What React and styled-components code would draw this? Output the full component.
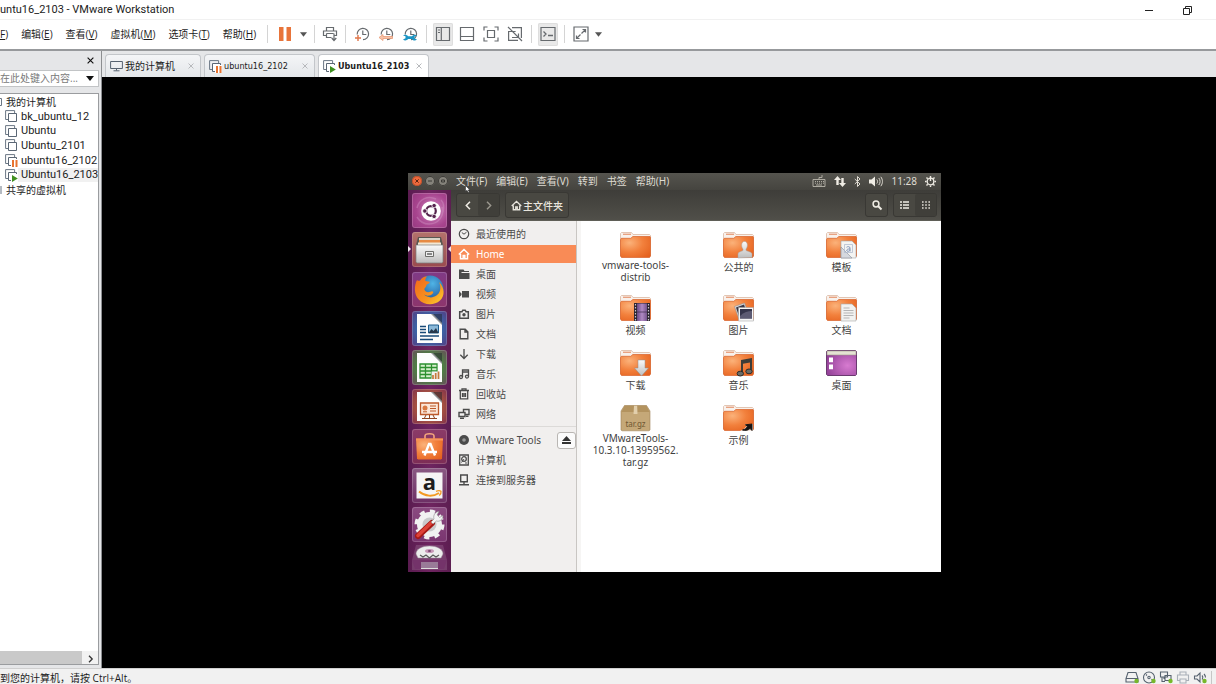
import React from "react";
import styled, { createGlobalStyle, css } from "styled-components";

const Global = createGlobalStyle`
  *, *::before, *::after { box-sizing: border-box; }
  html, body { margin: 0; padding: 0; }
  body {
    font-family: "Open Sans", "Noto Sans CJK SC", sans-serif;
    font-size: 10px;
    color: #1c1c1c;
    background: #e5e6e8;
  }
  button, input { font: inherit; color: inherit; }
  button { border: 0; padding: 0; margin: 0; background: none; white-space: nowrap; }
  ul { list-style: none; margin: 0; padding: 0; }
  svg { display: block; flex: none; overflow: visible; }
`;

/* ---------- host application shell ---------- */

const Shell = styled.div`
  min-height: 100vh;
  display: flex;
  flex-direction: column;
  overflow: hidden;
`;

const TitleBar = styled.header`
  height: 20px;
  flex: none;
  display: flex;
  align-items: center;
  justify-content: space-between;
  background: #fff;
  border-bottom: 1px solid #f1f1f1;
`;

const Title = styled.h1`
  margin: 0;
  font-family: Roboto, "Open Sans", sans-serif;
  font-size: 11px;
  font-weight: 400;
  line-height: 18px;
  white-space: nowrap;
`;

const WindowButtons = styled.div`
  display: flex;
  gap: 26px;
  padding-right: 23px;
`;

const MenuRow = styled.div`
  height: 31px;
  flex: none;
  display: flex;
  align-items: center;
  padding-bottom: 1px;
  background: #fff;
  border-bottom: 2px solid #97999c;
`;

const MenuBar = styled.nav`
  display: flex;
  gap: 13px;
  line-height: 16px;
  margin-right: 11px;
  u { text-underline-offset: 1px; }
`;

const Separator = styled.span`
  width: 1px;
  height: 18px;
  flex: none;
  background: #d4d4d4;
`;

const ToolGroup = styled.div`
  display: flex;
  align-items: center;
  gap: 4px;
  padding: 0 ${(p) => p.$pad}px;
`;

const Tool = styled.button`
  width: 20px;
  height: 23px;
  display: grid;
  place-items: center;
  border-radius: 2px;
  background: ${(p) => (p.$active ? "#e9e9e9" : "transparent")};
  ${(p) => p.$active && css`box-shadow: inset 0 0 0 1px #dedede;`}
`;

const Caret = styled.button`
  width: ${(p) => p.$w || 8}px;
  height: 16px;
  display: grid;
  place-items: center;
`;

const Body = styled.div`
  flex: 1;
  display: flex;
  min-height: 0;
`;

const Library = styled.aside`
  width: 102px;
  flex: none;
  display: flex;
  flex-direction: column;
  padding: 0 2px 3px 0;
  background: #e5e6e8;
  border-right: 1px solid #8c8e91;
`;

const LibraryHead = styled.div`
  height: 19px;
  display: flex;
  align-items: center;
  justify-content: flex-end;
  padding-right: 5px;
`;

const SearchBox = styled.div`
  height: 17px;
  display: flex;
  align-items: center;
  background: #fff;
  border: 1px solid #c2c4c6;
  border-left: 0;
  input {
    flex: 1;
    min-width: 0;
    padding: 0;
    border: 0;
    outline: 0;
    background: none;
    line-height: 15px;
    height: 15px;
  }
  input::placeholder { color: #7a7a7a; opacity: 1; }
`;

const TreeBox = styled.div`
  flex: 1;
  margin-top: 6px;
  display: flex;
  flex-direction: column;
  justify-content: space-between;
  background: #fff;
  border: 1px solid #9a9c9f;
  border-left: 0;
`;

const Tree = styled.ul`
  height: 103px;
  display: grid;
  grid-template-rows: repeat(7, 1fr);
  padding-top: 1px;
`;

const TreeRow = styled.button`
  width: 100%;
  height: 100%;
  display: flex;
  align-items: center;
  gap: ${(p) => (p.$vm ? 3 : 4)}px;
  line-height: 14px;
  font-size: ${(p) => (p.$vm ? 11 : 10)}px;
  padding-left: ${(p) => (p.$vm ? 5 : 0)}px;
  ${(p) => p.$vm && css`font-family: Roboto, "Open Sans", sans-serif;`}
  ${(p) => p.$selected && css`background: linear-gradient(90deg, #fff 18px, #f1f1f1 18px);`}
`;

const HScroll = styled.div`
  height: 13px;
  display: flex;
  align-items: stretch;
  background: #f2f2f2;
`;
const Thumb = styled.span`
  flex: 1;
  background: #c9c9c9;
`;

const Workspace = styled.main`
  flex: 1;
  min-width: 0;
  display: flex;
  flex-direction: column;
`;

const TabStrip = styled.div`
  height: 26px;
  flex: none;
  display: flex;
  align-items: flex-end;
  gap: 3px;
  padding-left: 3px;
`;

const Tab = styled.div`
  height: 23px;
  width: ${(p) => (p.$home ? 96 : 111)}px;
  display: flex;
  align-items: center;
  justify-content: space-between;
  padding: 0 6px 0 4px;
  border: 1px solid #c3c6ca;
  border-bottom: 0;
  border-radius: 4px 4px 0 0;
  background: ${(p) => (p.$active ? "#fff" : "linear-gradient(#f4f5f7, #e4e7ea)")};
`;

const TabLabel = styled.button`
  display: flex;
  align-items: center;
  gap: 2px;
  line-height: 16px;
  ${(p) =>
    p.$latin &&
    css`
      font-family: "DejaVu Sans Condensed", "DejaVu Sans", sans-serif;
      font-stretch: condensed;
      font-size: 9px;
    `}
  font-weight: ${(p) => (p.$active ? 700 : 400)};
`;

const Stage = styled.section`
  flex: 1;
  display: grid;
  place-items: center;
  padding-left: 31px;
  background: #000;
`;

const StatusBar = styled.footer`
  height: 16px;
  flex: none;
  display: flex;
  align-items: center;
  justify-content: space-between;
  background: #f1f1f1;
  border-top: 1px solid #cfcfcf;
  line-height: 14px;
  white-space: nowrap;
  padding-top: 2px;
`;
const StatusIcons = styled.div`
  display: flex;
  align-items: center;
  gap: 3px;
  padding-right: 4px;
`;
const Grip = styled.span`
  width: 1px;
  height: 13px;
  margin-left: 1px;
  background: #c6c6c6;
`;

/* ---------- guest desktop ---------- */

const Guest = styled.div`
  position: relative;
  width: 533px;
  height: 399px;
  display: flex;
  flex-direction: column;
  color: #3c3c3c;
  font-family: "Noto Sans", "Noto Sans CJK SC", sans-serif;
`;

const Panel = styled.div`
  height: 17px;
  flex: none;
  display: flex;
  align-items: center;
  justify-content: space-between;
  padding: 0 5px 1px 4px;
  color: #dfdbd2;
  background: linear-gradient(#55544e, #45443f);
`;

const PanelLeft = styled.div`
  display: flex;
  align-items: center;
`;
const Lights = styled.div`
  display: flex;
  gap: 3px;
`;
const Light = styled.button`
  width: 10px;
  height: 10px;
  display: grid;
  place-items: center;
  border-radius: 50%;
  color: #3b3a36;
  background: ${(p) => (p.$close ? "#ee6a3d" : "#85837b")};
  box-shadow: inset 0 0 0 1px ${(p) => (p.$close ? "#b9502c" : "#3b3a36")};
`;
const GuestMenu = styled.nav`
  display: flex;
  gap: 9px;
  margin-left: 8px;
  line-height: 16px;
`;
const Indicators = styled.div`
  display: flex;
  align-items: center;
  gap: 8px;
  line-height: 16px;
`;

const GuestBody = styled.div`
  flex: 1;
  display: flex;
  min-height: 0;
`;

const Launcher = styled.nav`
  width: 43px;
  flex: none;
  display: flex;
  flex-direction: column;
  padding: 3px 4px 0;
  background: linear-gradient(90deg, #5a1c50, #6f2460 50%, #5c1e51);
`;
const LauncherItems = styled.div`
  flex: 1;
  display: flex;
  flex-direction: column;
  justify-content: space-between;
`;
const Tile = styled.button`
  position: relative;
  width: 35px;
  height: 35px;
  display: grid;
  place-items: center;
  border-radius: 3px;
  background: ${(p) => p.$bg};
  box-shadow: inset 0 0 0 1px rgba(255, 255, 255, 0.18);
`;
const Pip = styled.span`
  position: absolute;
  top: 14px;
  ${(p) => (p.$right ? "right: -4px" : "left: -4px")};
  border: 3px solid transparent;
  ${(p) =>
    p.$right
      ? "border-right-color: #f0e6ee; border-left: 0"
      : "border-left-color: #f0e6ee; border-right: 0"};
`;
const Folded = styled.button`
  height: 30px;
  flex: none;
  display: grid;
  place-items: center;
`;

const Nautilus = styled.div`
  flex: 1;
  min-width: 0;
  display: flex;
  flex-direction: column;
`;
const NautilusBar = styled.div`
  height: 31px;
  flex: none;
  display: flex;
  align-items: center;
  gap: 5px;
  padding: 0 4px 0 5px;
  color: #e8e5dd;
  background: linear-gradient(#3e3d39, #504f49);
  border-bottom: 1px solid #5f5e57;
`;
const BarGroup = styled.div`
  display: flex;
  border: 1px solid #393834;
  border-radius: 3px;
  background: #494842;
  margin-left: ${(p) => (p.$push ? "auto" : 0)};
`;
const BarButton = styled.button`
  min-width: 21px;
  height: ${(p) => (p.$tall ? 24 : 22)}px;
  padding: 0 ${(p) => (p.$tall ? 5 : 0)}px;
  display: flex;
  align-items: center;
  justify-content: center;
  gap: 1px;
  font-weight: 500;
  background: ${(p) => (p.$dark ? "#403f3a" : "transparent")};
  border-radius: 2px;
`;

const Panes = styled.div`
  flex: 1;
  display: flex;
  min-height: 0;
`;
const Places = styled.aside`
  width: 126px;
  flex: none;
  padding-top: 3px;
  background: #f1efee;
  border-right: 1px solid #c9c6c3;
`;
const PlaceRow = styled.li`
  height: 20px;
  display: flex;
  align-items: center;
`;
const Place = styled.button`
  flex: 1;
  height: 18px;
  display: flex;
  align-items: center;
  gap: 6px;
  padding-left: 7px;
  line-height: 16px;
  font-size: 10px;
  color: ${(p) => (p.$active ? "#fff" : "#4b4b4b")};
  background: ${(p) => (p.$active ? "#f98b56" : "transparent")};
`;
const Rule = styled.hr`
  margin: 2px 0 3px;
  border: 0;
  border-top: 1px solid #dcdad8;
`;
const Eject = styled.button`
  width: 19px;
  height: 17px;
  display: grid;
  place-items: center;
  border: 1px solid #b9b6b3;
  border-radius: 3px;
  background: #fbfbfb;
`;

const Files = styled.ul`
  flex: 1;
  display: grid;
  grid-template-columns: repeat(3, 103px);
  align-content: start;
  row-gap: 12px;
  padding: 11px 0 0 3px;
  border-left: 4px solid #f6f5f4;
  background: #fff;
`;
const FileButton = styled.button`
  width: 100%;
  display: flex;
  flex-direction: column;
  align-items: center;
  gap: 1px;
  line-height: ${(p) => (p.$latin ? 12 : 16)}px;
  font-size: 10px;
  white-space: pre-line;
  color: #3f3f3f;
`;

const Pointer = styled.span`
  position: absolute;
  left: 57px;
  top: 12px;
`;

/* ---------- drawings ---------- */

const Svg = ({ w = 16, h = w, box, children, ...rest }) => (
  <svg width={w} height={h} viewBox={box || `0 0 ${w} ${h}`} fill="none" aria-hidden="true" {...rest}>
    {children}
  </svg>
);

const Down = ({ w = 7, color = "#555" }) => (
  <Svg w={w} h={5} box="0 0 8 5"><path d="M0 0h8L4 5z" fill={color} /></Svg>
);
const Cross = ({ size = 6, color = "#222", width = 1.3 }) => (
  <Svg w={size} box="0 0 8 8"><path d="M.7.7l6.600 6.600M7.300.7L.7 7.300" stroke={color} strokeWidth={width} /></Svg>
);

const VmIcon = ({ state }) => (
  <Svg w={13} h={13}>
    <path d="M3 9.500H.600V.600h9V3" stroke="#6b7785" />
    <path d="M3.500 3.500h8v8h-8z" fill="#fff" stroke="#5b6775" />
    {state === "paused" && (
      <g><path d="M6 5h7v8H6z" fill="#fff" /><path d="M7 6h2v7H7zM10.500 6h2v7h-2z" fill="#e8732f" /></g>
    )}
    {state === "running" && (
      <g><path d="M6 5h6v8H6z" fill="#fff" /><path d="M7 6l5.800 3.500L7 13z" fill="#3f8f1f" /></g>
    )}
  </Svg>
);
const Monitor = () => (
  <Svg w={13} h={12}>
    <path d="M.600 1.500h11.800v7H.600zM6.500 8.500v2M3.500 10.800h6" stroke="#566270" />
  </Svg>
);

const g = "#666a6e";
const PauseIcon = () => <Svg w={12} h={14}><path d="M0 0h4.500v14H0zM7.500 0H12v14H7.500z" fill="#e8743a" /></Svg>;
const SendIcon = () => (
  <Svg w={16} stroke={g} strokeWidth="1.200">
    <path d="M4.500 5V1.500h7V5M4 9.500H1.500V5h13v4.500H12M4.500 7.500h7M4.500 7.500v4H9.500M12 7.500v7M9.700 12l2.300 2.500 2.300-2.500" />
  </Svg>
);
const Clock = ({ children }) => (
  <Svg w={16}>
    <path d="M3.200 8.500A5.700 5.700 0 1 1 9 13.700M8.800 4.500v4h3.500" stroke={g} strokeWidth="1.200" />
    {children}
  </Svg>
);
const SnapIcon = () => <Clock><path d="M4 9v6M1 12h6" stroke="#e0764a" strokeWidth="1.400" /></Clock>;
const RevertIcon = () => <Clock><path d="M14.500 10.500H5V8.500L1 11.500l4 3v-2h9.500z" fill="#f6c2a8" stroke="#e99a76" strokeWidth=".8" /></Clock>;
const ManageIcon = () => (
  <Clock><path d="M1 9.500l2.500.8v2L1 13.500c1.500 1.500 4 1.200 5-.5h4c1.200 2 3.500 2 5 .5l-2.500-1v-2l2.500-1c-1.500-1.300-4-1-5 .8H6c-1-1.700-3.500-2-5-.8z" fill="#1b95c4" /></Clock>
);
const SideIcon = () => <Svg w={16}><path d="M1.500 1.500h13v13h-13zM6.300 1.500v13M3 4h2M3 6.500h2" stroke={g} strokeWidth="1.200" /></Svg>;
const ThumbIcon = () => <Svg w={16}><path d="M1.500 1.500h13v13h-13zM1.500 10.500h13" stroke={g} strokeWidth="1.200" /></Svg>;
const FullIcon = () => (
  <Svg w={16}><path d="M1 4.500V1h3.500M11.500 1H15v3.500M15 11.500V15h-3.500M4.500 15H1v-3.500M4.500 4.500h7v7h-7z" stroke={g} strokeWidth="1.200" /></Svg>
);
const UnityIcon = () => (
  <Svg w={16}>
    <path d="M5 1.600h9.400V12M11 14.400H1.600V5.500h7M11.500 7.500v4H5M1 1l14 14" stroke={g} strokeWidth="1.200" />
  </Svg>
);
const ConsoleIcon = () => (
  <Svg w={16}><path d="M1 1.500h14v13H1z" stroke={g} strokeWidth="1.200" /><path d="M3.500 5.500L6 8l-2.500 2.500M8 9.500h5" stroke={g} strokeWidth="1.300" /></Svg>
);
const StretchIcon = () => (
  <Svg w={16}><path d="M1 1h14v14H1zM9.500 3.500h3v3M12.500 3.500l-4 4M6.500 12.500h-3v-3M3.500 12.500l4-4" stroke={g} strokeWidth="1.200" /></Svg>
);

/* status bar devices */
const Dot = () => <circle cx="11.500" cy="10" r="2.200" fill="#77b82a" />;
const Device = ({ d, faded, dot = true }) => (
  <Svg w={14} h={13}><path d={d} stroke={faded ? "#a9b0b8" : "#56626f"} strokeWidth="1.100" />{dot && <Dot />}</Svg>
);
const DEVICES = [
  { d: "M3 1.500h8l2 6v3.500H1V7.500zM1 7.500h12" },
  { d: "M12.500 6.500a5.500 5.500 0 1 1-11 0a5.500 5.500 0 0 1 11 0zM8.200 6.500a1.200 1.200 0 1 1-2.400 0a1.200 1.200 0 0 1 2.400 0zM4 4.500l1-1M9.500 9l.8-.8" },
  { d: "M1.500 1h7v5h-7zM6 4.500h6v5H6zM3 6v4.500h3M5 6v2" },
  { d: "M4 4V1h6v3M4 9.500H1.500V4h11v5.500H10M4 8h6v4H4z", faded: true, dot: false },
  { d: "M1.500 5h2.500l3-3v9l-3-3H1.500zM9 4.500c1 1 1 3 0 4M11 3c1 1 1.500 2 1.500 3.500" },
];

/* guest panel glyphs */
const KeyboardGlyph = () => (
  <Svg w={14} h={12} stroke="#b9b5ab" strokeWidth=".9">
    <path d="M1 4.500h12v7H1zM7 4.500V2.500h3V0M3 6.500h1M5 6.500h1M7 6.500h1M9 6.500h1M11 6.500h1M3 8.200h1M5 8.200h1M7 8.200h1M9 8.200h1M11 8.200h1M4 10h6" />
  </Svg>
);
const NetGlyph = () => (
  <Svg w={12} h={11}>
    <path d="M3.500 0L7 4H4.700v5H2.300V4H0zM8.500 11L5 7h2.300V2h2.400v5H12z" fill="#efece4" />
  </Svg>
);
const BtGlyph = () => <Svg w={7} h={11}><path d="M.8 3l5.200 5-2.500 2.500v-10L6 3 .8 8" stroke="#dfdbd2" /></Svg>;
const VolGlyph = () => (
  <Svg w={14} h={11}>
    <path d="M0 3.500h2.500L6 .5v10L2.500 7.500H0z" fill="#efece4" />
    <path d="M7.800 3.500c1 1 1 3 0 4M9.800 2c1.700 2 1.700 5 0 7M11.800.8c2.200 3 2.200 6.400 0 9.400" stroke="#dfdbd2" />
  </Svg>
);
const PowerGlyph = () => (
  <Svg w={11} h={11}>
    <circle cx="5.500" cy="5.500" r="3.300" stroke="#efece4" strokeWidth="1.300" />
    <path d="M5.500 0v5M1.500 1.500l1.200 1.200M9.500 1.500L8.300 2.700M0 5.500h1.600M9.400 5.500H11M1.500 9.500l1.200-1.200M9.500 9.500L8.300 8.300M5.500 9.400V11" stroke="#efece4" strokeWidth="1.400" />
  </Svg>
);

/* places sidebar glyphs, all on a 12-unit square */
const PLACE_ICONS = {
  recent: <g><circle cx="6" cy="6" r="4.700" stroke="currentColor" strokeWidth="1.200" /><path d="M3.800 4.500L6 6.200l2.500-2" stroke="currentColor" /></g>,
  home: <path d="M.8 6.500L6 1.500l5.200 5M2.500 6v4.700h2.700V7.500h1.600v3.200h2.700V6" stroke="currentColor" strokeWidth="1.500" />,
  folder: <path d="M1 1.500h4.500L6.500 3H11v1H3.500v7H1zM4 5h7.500v6H4zM3 5h8v6H2z" fill="currentColor" />,
  video: <path d="M4 3h7v6.500H4zM1 3l2.500 2.500v1.500L1 9.500z" fill="currentColor" />,
  photo: <g><path d="M1.700 3.700h2.300l.8-1.500h2.400l.8 1.500h2.300v6.600H1.700z" stroke="currentColor" strokeWidth="1.500" /><circle cx="6" cy="6.700" r="1.700" fill="currentColor" /></g>,
  doc: <path d="M2.200 1.200h5l2.600 2.600v7H2.200zM7 1.200V4h2.800" stroke="currentColor" strokeWidth="1.400" />,
  down: <path d="M6 1v9.500M2.300 6.800L6 10.500l3.700-3.700" stroke="currentColor" strokeWidth="1.300" />,
  music: <g stroke="currentColor" strokeWidth="1.300"><path d="M4.500 9V2h6v6.500M4.500 4h6" /><circle cx="3" cy="9" r="1.500" /><circle cx="9" cy="8.600" r="1.500" /></g>,
  trash: <path d="M1 2.500h10M4 2V.8h4V2M2.300 2.500v8.300h7.400V2.500M4.500 5v4M6 5v4M7.500 5v4" stroke="currentColor" strokeWidth="1.300" />,
  network: <g><path d="M1 4.500h6v4H1zM5.500 4.500v-3h5.500v5H7" stroke="currentColor" strokeWidth="1.400" /><path d="M2 9.500h4v1.500H2zM8 7.500h2.500V9H8z" fill="currentColor" /></g>,
  disc: <g><circle cx="6" cy="6" r="5" fill="currentColor" /><circle cx="6" cy="6" r="1.800" fill="#999" /></g>,
  drive: <g><path d="M1.700 1h8.600v10H1.700z" stroke="currentColor" strokeWidth="1.300" /><circle cx="6" cy="5" r="2.300" stroke="currentColor" strokeWidth="1.300" /><path d="M6 5l-2.500 3.500M7 9h2" stroke="currentColor" /></g>,
  server: <path d="M2.700 1h6.600v6.800H2.700zM6 7.800V10M1 10.800h10" stroke="currentColor" strokeWidth="1.400" />,
};
const PlaceIcon = ({ name, size = 12 }) => <Svg w={size} box="0 0 12 12">{PLACE_ICONS[name]}</Svg>;

/* folders and files */
const Defs = () => (
  <svg width="0" height="0" style={{ position: "absolute" }} aria-hidden="true">
    <defs>
      <radialGradient id="orange" cx=".3" cy=".3" r=".9">
        <stop offset="0" stopColor="#fbb27a" /><stop offset=".5" stopColor="#f2803c" /><stop offset="1" stopColor="#e4601d" />
      </radialGradient>
      <linearGradient id="silver" x2="0" y2="1"><stop offset="0" stopColor="#fafafa" /><stop offset="1" stopColor="#bdbdbd" /></linearGradient>
      <radialGradient id="purple" cx=".7" cy=".6" r=".8"><stop offset="0" stopColor="#d77bd0" /><stop offset="1" stopColor="#8d3c93" /></radialGradient>
      <linearGradient id="film"><stop offset="0" stopColor="#6b4a86" /><stop offset=".5" stopColor="#b08ac4" /><stop offset="1" stopColor="#76558e" /></linearGradient>
      <radialGradient id="globe" cx=".6" cy=".3" r=".8"><stop offset="0" stopColor="#4fb4e6" /><stop offset="1" stopColor="#163e86" /></radialGradient>
      <linearGradient id="flame" x2="1" y2="1"><stop offset="0" stopColor="#f0661c" /><stop offset=".6" stopColor="#f7931e" /><stop offset="1" stopColor="#fdd231" /></linearGradient>
    </defs>
  </svg>
);

const EMBLEMS = {
  people: <path d="M15 26v-4c0-2 3-2.500 5-3.500v-1.500c-2-2-2-7.500 1.500-7.500s3.500 5.500 1.500 7.500v1.500c2 1 6 1.500 6 3.500v3.500z" fill="url(#silver)" stroke="#a3a3a3" strokeWidth=".5" />,
  template: (
    <g><path d="M15 9h11l4 4v13H15z" fill="#f4f4f2" stroke="#a5a5a5" strokeWidth=".6" /><path d="M15 15v11h11z" fill="#d5d8de" stroke="#8a8f98" strokeWidth=".6" />
      <path d="M18.500 12.500h8v8h-8z" stroke="#aab6cc" strokeWidth=".7" /><path d="M20.500 15.300c1-1 3.500-1 3.500.7v3.500M24 17c-4-.4-4 2.300-2 2.300 1 0 2-.8 2-1.500" stroke="#8095bb" /></g>
  ),
  video: (
    <g><path d="M14 8h16v18H14z" fill="#2b2530" /><path d="M17 8.500h10V26H17z" fill="url(#film)" /><path d="M17 17h10" stroke="#473257" strokeWidth=".8" />
      <path d="M15.500 9v17M28.500 9v17" stroke="#c9c2cd" strokeWidth="1.200" strokeDasharray="1.500 1.500" /></g>
  ),
  photo: (
    <g><path d="M11.500 11.500l10-3.500 4 11-10 4z" fill="#d9d9dc" stroke="#8b8b8b" strokeWidth=".5" /><path d="M13 12.500l8-3 3 9-8 3z" fill="#3a3846" />
      <path d="M15.500 12.500h15V26h-15z" fill="#f6f6f6" stroke="#9a9a9a" strokeWidth=".5" /><path d="M17 14h12v9.500H17z" fill="#34344a" /><path d="M17 21c4-4 8-5 12-5v7.500H17z" fill="#5c5a72" /></g>
  ),
  doc: <g><path d="M15 9h11l4 4v13H15z" fill="#f2f2f0" stroke="#a8a8a8" strokeWidth=".6" /><path d="M17.500 13h6M17.500 15.500h10M17.500 18h10M17.500 20.500h10M17.500 23h6" stroke="#b5b5b5" /></g>,
  down: <path d="M18 10h7v8h3.500l-7 8-7-8H18z" fill="url(#silver)" stroke="#8f8f8f" strokeWidth=".5" />,
  music: <g fill="#3c3c38"><path d="M18 10l11-2v13h-2V12.500l-7 1.300V24h-2z" /><ellipse cx="17.300" cy="23.600" rx="3.200" ry="2.400" fill="#6b6b66" stroke="#2d2d2a" /><ellipse cx="26" cy="21.400" rx="3.200" ry="2.400" fill="#6b6b66" stroke="#2d2d2a" /></g>,
  link: <g><path d="M17 26c3-1 5-3 7-5l-2-2h8v7z" fill="#f7e9df" /><path d="M19.500 25c2.500-.5 4-2 5-3.500l-2-1.700 6.500-.8v6.500l-2-2c-2 1.800-4 2.300-7.500 1.500z" fill="#181412" stroke="#181412" /></g>,
};

const FolderArt = ({ emblem }) => (
  <Svg w={31} h={26}>
    <path d="M.5 24V1.500L1.500.5h10l1.500 2h16.500l1 1V24z" fill="#f8f1ec" stroke="#dcb8a2" strokeWidth=".8" />
    <path d="M3 2.300h8" stroke="#e8a281" strokeWidth="1.400" />
    <path d="M.5 7.500l.8-1.200h9.500l2-1.800h17.200l.5.8V24l-1 1.500h-28l-1-1.500z" fill="url(#orange)" stroke="#d9622a" strokeWidth=".7" />
    {EMBLEMS[emblem]}
  </Svg>
);
const DesktopArt = () => (
  <Svg w={31} h={26}>
    <path d="M.5 1.500l1-1h28l1 1v23l-1 1h-28l-1-1z" fill="url(#purple)" stroke="#6a3a70" />
    <path d="M1 1h29v4H1z" fill="#e4e3d3" stroke="#9d9c8b" strokeWidth=".6" />
    <path d="M3 7.500h4v4.800H3zM3 14.500h4v4.800H3z" fill="#fff" />
  </Svg>
);
const ArchiveArt = () => (
  <Svg w={31} h={26}>
    <path d="M4.500.5h22L30 6v19l-1 .8H2L1 25V6z" fill="#c5a878" stroke="#9d8257" strokeWidth=".6" />
    <path d="M4.500.8h22L29.500 7h-28z" fill="#b3935f" /><path d="M14 .8h3.200L17.500 9h-4z" fill="#e2cfac" />
    <text x="15.500" y="22" textAnchor="middle" fontFamily="Noto Sans, sans-serif" fontSize="8" fill="#6f5732">tar.gz</text>
  </Svg>
);

/* launcher drawings */
const UbuntuArt = () => (
  <Svg w={31}>
    <path d="M3 13C5 4 14 0 22 4M28 12c3 9-4 17-13 17M3 22c3 5 8 7 12 7M27 5c3 3 3 8 2 12" stroke="#d9a3cd" strokeWidth="1.500" opacity=".35" />
    <circle cx="17" cy="16" r="9.800" fill="#fff" />
    <circle cx="17" cy="16" r="4.800" stroke="#55244d" strokeWidth="2.200" />
    <g fill="#55244d" stroke="#fff" strokeWidth=".8"><circle cx="10.800" cy="16" r="2.200" /><circle cx="20.100" cy="10.600" r="2.200" /><circle cx="20.100" cy="21.400" r="2.200" /></g>
  </Svg>
);
const CabinetArt = () => (
  <Svg w={31}>
    <path d="M4 3h23l2 8H2z" fill="#5a5751" /><path d="M5 4h21v6H5z" fill="#d9d4c8" /><path d="M5 6h21v5H5z" fill="#e68a43" /><path d="M4 8.500h23V12H4z" fill="#f2e7d3" />
    <path d="M2 11h27v17l-1 1H3l-1-1z" fill="url(#silver)" stroke="#7d7d7b" strokeWidth=".7" />
    <path d="M11.500 17.500h8v5h-8z" fill="#eee" stroke="#6d6d6b" /><path d="M13 20h5" stroke="#444" strokeWidth="1.200" />
  </Svg>
);
const FirefoxArt = () => (
  <Svg w={33}>
    <circle cx="17" cy="16" r="13.500" fill="url(#globe)" />
    <path d="M4 7c1 1 2 1 3 .5C9 4 12 3 14 3.500c-1.500 1.500-2 3-1.500 4.500l4 .8c.6 1.600-1.500 2-3 3 0 2.500-2.500 3-2 5 .8 2.500 4 3 6.500 1.600 2-.8 3 .6 1.700 2-2 2.400-6 3-8.700 1.200 5 5 14 3 16-4 .8-3.500 0-6.600-1-8.600 6 6 6 14 1 18.500-6 5.500-16 5-21.500-1.200C1 21 1 13 4 7z" fill="url(#flame)" />
  </Svg>
);
const Sheet = ({ children }) => (
  <Svg w={31}><path d="M3 1h16l9 9v20H3z" fill="#fdfdfd" /><path d="M17 1h11v11z" fill="#20242a" opacity=".5" />{children}</Svg>
);
const WriterArt = () => (
  <Sheet><path d="M6 13.500h6M6 16.500h6M6 19.500h6M6 23h19M6 26.500h13" stroke="#174a78" strokeWidth="1.500" /><path d="M14.500 12h10v8h-10z" fill="#8ab8d8" stroke="#1d5c8d" /><path d="M14.500 20l3-4 2 2 2.500-3 2.500 5z" fill="#26384c" /></Sheet>
);
const CalcArt = () => (
  <Sheet><path d="M6 12h16v14H6z" fill="#d6efcd" /><path d="M6 12h17v14H6zM6 15.500h17M6 19h17M6 22.500h17M11.500 12v14M17.500 12v14" stroke="#2d9030" strokeWidth="1.300" /><path d="M17.500 19.500h9v8h-9z" fill="#f2f2f2" /><path d="M19 27v-4M21.700 27v-6M24.500 27v-7.500" stroke="#c57a3c" strokeWidth="1.700" /></Sheet>
);
const ImpressArt = () => (
  <Sheet><path d="M6.500 12h18v11.500h-18z" fill="#fbe7d8" stroke="#bd5a2b" strokeWidth="1.300" /><circle cx="11" cy="17" r="2.500" fill="#d87942" /><path d="M16 15h6M16 17.500h6M16 20h6M9 20.800h4" stroke="#bd5a2b" /><path d="M12 24l-2 4M19 24l2 4M15.500 24v3M8 27.500h15" stroke="#8f4520" /></Sheet>
);
const SoftwareArt = () => (
  <Svg w={31}>
    <path d="M11 9V5c0-3 9-3 9 0v4" stroke="#f4a57c" strokeWidth="1.600" /><path d="M2 7.500h27l-1 20-1 1H4l-1-1z" fill="url(#orange)" /><path d="M2 7.500h27v2H2z" fill="#f6955d" />
    <path d="M10.500 24.500L15 13h1.500L21 24.500M8 21h15" stroke="#fff" strokeWidth="2.400" />
  </Svg>
);
const AmazonArt = () => (
  <Svg w={31}>
    <path d="M2.500 2.500h26v26h-26z" fill="#f5f5f5" />
    <text x="15.500" y="20" textAnchor="middle" fontFamily="Open Sans, sans-serif" fontWeight="700" fontSize="22" fill="#1d1d1d">a</text>
    <path d="M5 21.500c6 5 14 5.500 20 1.500" stroke="#f39a22" strokeWidth="2" /><path d="M22 21.300c2-.8 4-.8 5 0 .3 1.500-.6 3.200-1.800 4.200" stroke="#f39a22" strokeWidth="1.300" />
  </Svg>
);
const SettingsArt = () => (
  <Svg w={33}>
    <circle cx="16.500" cy="16.500" r="9" stroke="#f1f1f1" strokeWidth="7" />
    <circle cx="16.500" cy="16.500" r="13.300" stroke="#f1f1f1" strokeWidth="3.400" strokeDasharray="5.200 5.240" />
    <circle cx="16.500" cy="16.500" r="7" fill="#c9c9cb" />
    <path d="M5 28L19 15" stroke="#a51916" strokeWidth="6" strokeLinecap="round" /><path d="M5 27.500L18 15" stroke="#dd4238" strokeWidth="3.500" strokeLinecap="round" />
    <path d="M18 14l3-3c-1-4 1-7 5-7.500l-2 3.500 2.500 2.500 3.500-2c0 4-3.500 6.500-6.500 5.500L20 16z" fill="#f4f4f4" stroke="#8b8b8b" strokeWidth=".6" />
  </Svg>
);
const DvdArt = () => (
  <Svg w={35} h={27}>
    <path d="M4 1h27l4 15v10H0V16z" fill="#8b5a83" opacity=".5" /><path d="M0 16h35l-3 9H3z" fill="#74336a" />
    <path d="M4 10c0-5 6-8 13.500-8S31 5 31 10l-2 4H6z" fill="#ececec" stroke="#9a8c98" strokeWidth=".5" />
    <ellipse cx="17.500" cy="7" rx="4.500" ry="2" fill="#c798b8" /><ellipse cx="17.500" cy="7" rx="1.700" ry=".8" fill="#5b2a53" />
    <path d="M8 11l3 2 3-2 3.500 3 3.500-3 3 2 3-2" stroke="#5a5a5a" strokeWidth="1.300" />
    <path d="M9 18h17v7H9z" fill="#aa9aac" opacity=".7" /><path d="M9 24.500h17" stroke="#ddd" />
  </Svg>
);

/* ---------- data ---------- */

const MENUS = [["", "F"], ["编辑", "E"], ["查看", "V"], ["虚拟机", "M"], ["选项卡", "T"], ["帮助", "H"]];
const VMS = [["bk_ubuntu_12"], ["Ubuntu"], ["Ubuntu_2101"], ["ubuntu16_2102", "paused"], ["Ubuntu16_2103", "running"]];
const PLACES = [
  ["recent", "最近使用的"], ["home", "Home"], ["folder", "桌面"], ["video", "视频"], ["photo", "图片"],
  ["doc", "文档"], ["down", "下载"], ["music", "音乐"], ["trash", "回收站"], ["network", "网络"],
];
const DEVICE_PLACES = [["disc", "VMware Tools"], ["drive", "计算机"], ["server", "连接到服务器"]];
const FILES = [
  { name: "vmware-tools-\ndistrib", latin: true },
  { name: "公共的", emblem: "people" },
  { name: "模板", emblem: "template" },
  { name: "视频", emblem: "video" },
  { name: "图片", emblem: "photo" },
  { name: "文档", emblem: "doc" },
  { name: "下载", emblem: "down" },
  { name: "音乐", emblem: "music" },
  { name: "桌面", art: <DesktopArt /> },
  { name: "VMwareTools-\n10.3.10-13959562.\ntar.gz", latin: true, art: <ArchiveArt /> },
  { name: "示例", emblem: "link" },
];
const APPS = [
  ["Dash", <UbuntuArt />, "radial-gradient(circle at 60% 50%, #d58fc4, #a8458f 60%, #96387f)"],
  ["文件", <CabinetArt />, "linear-gradient(#b3736c, #9a4a4f)"],
  ["Firefox", <FirefoxArt />, "linear-gradient(#803a86, #8d356c)"],
  ["Writer", <WriterArt />, "radial-gradient(#2f77b8 30%, #553a80)"],
  ["Calc", <CalcArt />, "radial-gradient(#3f9a38 30%, #6a4a5c)"],
  ["Impress", <ImpressArt />, "radial-gradient(#b8623a 30%, #80304c)"],
  ["软件", <SoftwareArt />, "linear-gradient(#8b3b68, #7d2d56)"],
  ["Amazon", <AmazonArt />, "linear-gradient(#8a5a83, #6d2f65)"],
  ["设置", <SettingsArt />, "linear-gradient(#8a4a80, #7a3570)"],
];

function GuestDesktop() {
  return (
    <Guest>
      <Panel>
        <PanelLeft>
          <Lights>
            <Light $close aria-label="关闭"><Cross size={4} color="#5c2411" width={2} /></Light>
            <Light aria-label="最小化"><Svg w={4} h={2}><path d="M0 1h4" stroke="#3b3a36" /></Svg></Light>
            <Light aria-label="还原"><Svg w={4} h={4}><path d="M.5 1h3v2h-3z" stroke="#3b3a36" /></Svg></Light>
          </Lights>
          <GuestMenu>
            {["文件(F)", "编辑(E)", "查看(V)", "转到", "书签", "帮助(H)"].map((m) => <button key={m}>{m}</button>)}
          </GuestMenu>
        </PanelLeft>
        <Indicators>
          <KeyboardGlyph /><NetGlyph /><BtGlyph /><VolGlyph /><time>11:28</time><PowerGlyph />
        </Indicators>
      </Panel>
      <GuestBody>
        <Launcher>
          <LauncherItems>
            {APPS.map(([name, art, bg], i) => (
              <Tile key={name} aria-label={name} $bg={bg}>
                {art}
                {i === 1 && <><Pip /><Pip $right /></>}
              </Tile>
            ))}
          </LauncherItems>
          <Folded aria-label="DVD"><DvdArt /></Folded>
        </Launcher>
        <Nautilus>
          <NautilusBar>
            <BarGroup>
              <BarButton aria-label="后退"><Svg w={6} h={9}><path d="M5 .8L1.300 4.500 5 8.200" stroke="#f0ede5" strokeWidth="1.500" /></Svg></BarButton>
              <BarButton $dark aria-label="前进"><Svg w={6} h={9}><path d="M1 .8l3.700 3.700L1 8.200" stroke="#9b988f" strokeWidth="1.400" /></Svg></BarButton>
            </BarGroup>
            <BarGroup><BarButton $tall><PlaceIcon name="home" size={11} />主文件夹</BarButton></BarGroup>
            <BarGroup $push>
              <BarButton aria-label="搜索"><Svg w={10}><circle cx="4" cy="4" r="2.900" stroke="#f0ede5" strokeWidth="1.500" /><path d="M6 6l3.500 3.500" stroke="#f0ede5" strokeWidth="2" /></Svg></BarButton>
            </BarGroup>
            <BarGroup>
              <BarButton aria-label="列表"><Svg w={9} h={8}><path d="M0 1h2M3 1h6M0 4h2M3 4h6M0 7h2M3 7h6" stroke="#f0ede5" strokeWidth="1.500" /></Svg></BarButton>
              <BarButton $dark aria-label="图标"><Svg w={8} h={8}><path d="M0 1h8M0 4h8M0 7h8" stroke="#e0ddd5" strokeWidth="1.600" strokeDasharray="1.600 1.600" /></Svg></BarButton>
            </BarGroup>
          </NautilusBar>
          <Panes>
            <Places>
              <ul>
                {PLACES.map(([icon, name]) => (
                  <PlaceRow key={name}><Place $active={icon === "home"}><PlaceIcon name={icon} />{name}</Place></PlaceRow>
                ))}
              </ul>
              <Rule />
              <ul>
                {DEVICE_PLACES.map(([icon, name]) => (
                  <PlaceRow key={name}>
                    <Place><PlaceIcon name={icon} />{name}</Place>
                    {icon === "disc" && <Eject aria-label="弹出"><Svg w={9} h={8}><path d="M4.500 0L9 5H0zM0 6h9v2H0z" fill="#333" /></Svg></Eject>}
                  </PlaceRow>
                ))}
              </ul>
            </Places>
            <Files>
              {FILES.map((f) => (
                <li key={f.name}>
                  <FileButton $latin={f.latin}>{f.art || <FolderArt emblem={f.emblem} />}<span>{f.name}</span></FileButton>
                </li>
              ))}
            </Files>
          </Panes>
        </Nautilus>
      </GuestBody>
      <Pointer>
        <Svg w={6} h={8}><path d="M.5.5v6l1.500-1.300L3.300 7.500l1-.6-1.100-2H5z" fill="#fff" stroke="#222" strokeWidth=".5" /></Svg>
      </Pointer>
    </Guest>
  );
}

export default function App() {
  return (
    <Shell>
      <Global />
      <Defs />
      <TitleBar>
        <Title>untu16_2103 - VMware Workstation</Title>
        <WindowButtons>
          <button aria-label="最小化"><Svg w={12} h={10}><path d="M2 5.500h8" stroke="#222" /></Svg></button>
          <button aria-label="还原"><Svg w={12} h={10}><path d="M2.500 3.500h6v6h-6zM4.500 3.500v-2h6v6h-2" stroke="#222" /></Svg></button>
        </WindowButtons>
      </TitleBar>

      <MenuRow>
        <MenuBar>
          {MENUS.map(([label, key]) => (
            <button key={key}>{label}{label && "("}<u>{key}</u>)</button>
          ))}
        </MenuBar>
        <Separator />
        <ToolGroup $pad={7}>
          <Tool aria-label="暂停"><PauseIcon /></Tool>
          <Caret aria-label="电源选项"><Down /></Caret>
        </ToolGroup>
        <Separator />
        <ToolGroup $pad={5}><Tool aria-label="发送"><SendIcon /></Tool></ToolGroup>
        <Separator />
        <ToolGroup $pad={6}>
          <Tool aria-label="快照"><SnapIcon /></Tool>
          <Tool aria-label="恢复快照"><RevertIcon /></Tool>
          <Tool aria-label="管理快照"><ManageIcon /></Tool>
        </ToolGroup>
        <Separator />
        <ToolGroup $pad={6}>
          <Tool $active aria-label="库"><SideIcon /></Tool>
          <Tool aria-label="缩略图"><ThumbIcon /></Tool>
          <Tool aria-label="全屏"><FullIcon /></Tool>
          <Tool aria-label="Unity"><UnityIcon /></Tool>
        </ToolGroup>
        <Separator />
        <ToolGroup $pad={6}><Tool $active aria-label="控制台"><ConsoleIcon /></Tool></ToolGroup>
        <Separator />
        <ToolGroup $pad={6}>
          <Tool aria-label="拉伸"><StretchIcon /></Tool>
          <Caret $w={6} aria-label="拉伸选项"><Down /></Caret>
        </ToolGroup>
      </MenuRow>

      <Body>
        <Library>
          <LibraryHead><button aria-label="关闭库"><Cross size={7} color="#111" /></button></LibraryHead>
          <SearchBox>
            <input type="text" aria-label="搜索" placeholder="在此处键入内容..." />
            <Caret $w={16} aria-label="筛选"><Down w={8} color="#111" /></Caret>
          </SearchBox>
          <TreeBox>
            <Tree>
              <li><TreeRow><Svg w={2} h={8}><path d="M0 .5h1.500v7H0" stroke="#6b7785" /></Svg>我的计算机</TreeRow></li>
              {VMS.map(([name, state]) => (
                <li key={name}><TreeRow $vm $selected={state === "running"}><VmIcon state={state} />{name}</TreeRow></li>
              ))}
              <li><TreeRow><Svg w={2} h={8}><path d="M1 0v8" stroke="#6b7785" /></Svg>共享的虚拟机</TreeRow></li>
            </Tree>
            <HScroll>
              <Thumb />
              <Caret $w={16} aria-label="向右滚动"><Svg w={5} h={8}><path d="M1 .8L4.200 4 1 7.200" stroke="#333" strokeWidth="1.300" /></Svg></Caret>
            </HScroll>
          </TreeBox>
        </Library>

        <Workspace>
          <TabStrip>
            <Tab $home>
              <TabLabel><Monitor />我的计算机</TabLabel>
              <button aria-label="关闭标签"><Cross color="#b5b7ba" /></button>
            </Tab>
            <Tab>
              <TabLabel $latin><VmIcon state="paused" />ubuntu16_2102</TabLabel>
              <button aria-label="关闭标签"><Cross color="#b5b7ba" /></button>
            </Tab>
            <Tab $active>
              <TabLabel $latin $active><VmIcon state="running" />Ubuntu16_2103</TabLabel>
              <button aria-label="关闭标签"><Cross color="#b5b7ba" /></button>
            </Tab>
          </TabStrip>
          <Stage><GuestDesktop /></Stage>
        </Workspace>
      </Body>

      <StatusBar>
        <span>到您的计算机，请按 Ctrl+Alt。</span>
        <StatusIcons>
          {DEVICES.map((d, i) => <Device key={i} {...d} />)}
          <Grip />
        </StatusIcons>
      </StatusBar>
    </Shell>
  );
}
